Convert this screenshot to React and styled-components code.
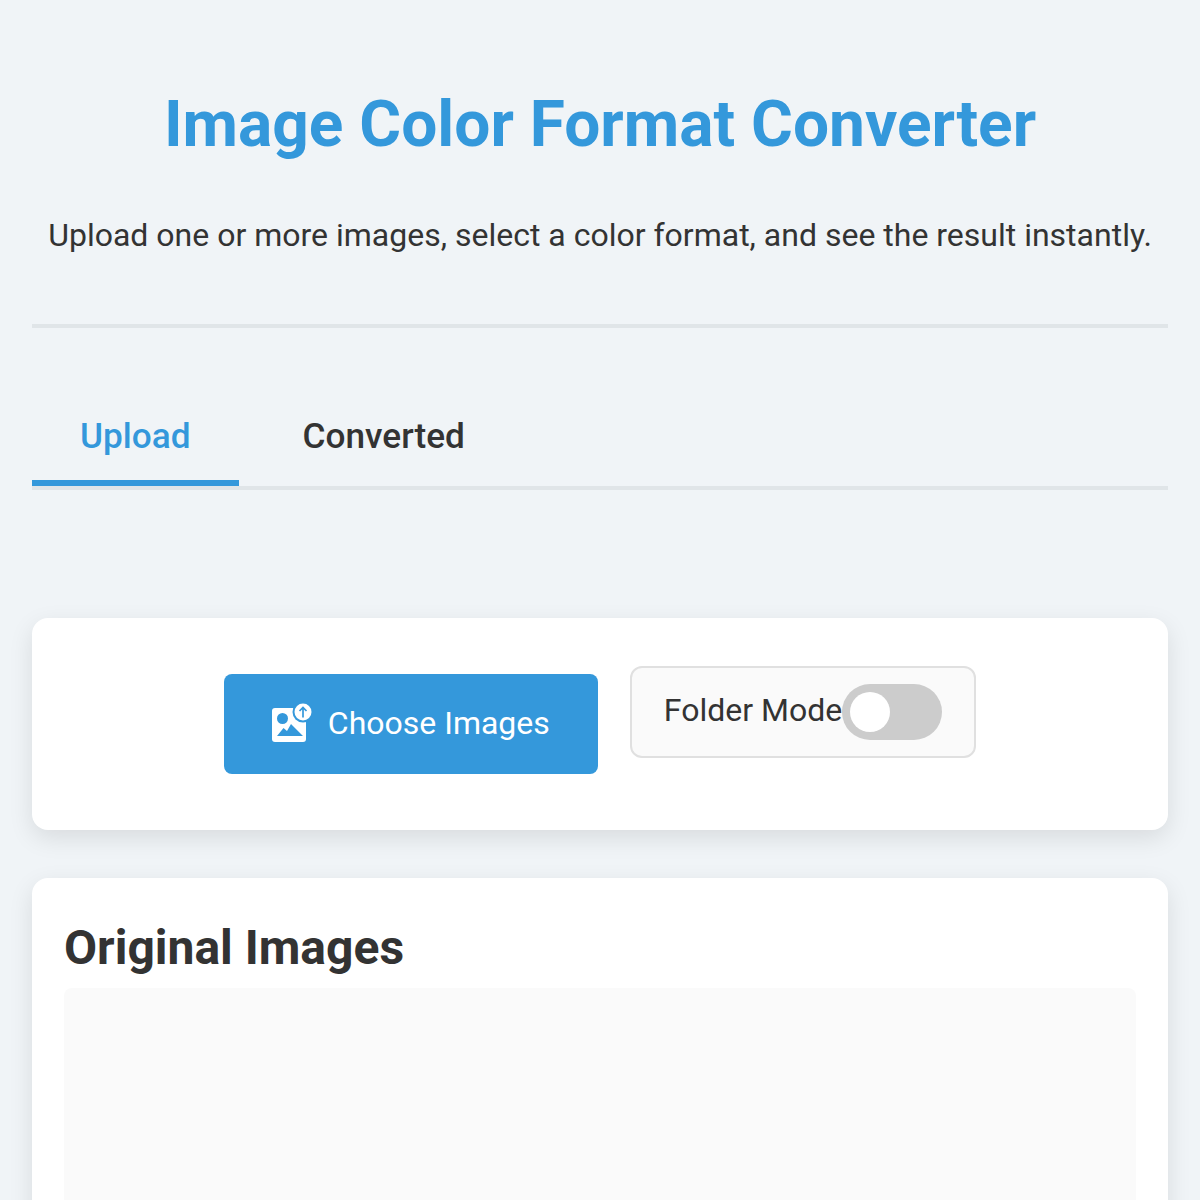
import React from "react";
import styled, { createGlobalStyle } from "styled-components";

const Global = createGlobalStyle`
  html, body { margin: 0; padding: 0; background: #f0f4f7; }
  body { font-family: Roboto, "Liberation Sans", sans-serif; color: #333; }
  * { box-sizing: border-box; }
`;

const Page = styled.div`
  height: 1200px;
  overflow: hidden;
  padding: 0 32px;
`;

const Header = styled.header`
  height: 328px;
  padding-top: 89px;
  border-bottom: 4px solid #e0e5e8;
  text-align: center;
`;

const Title = styled.h1`
  margin: 0;
  font-size: 64px;
  line-height: 72px;
  font-weight: 700;
  color: #3498db;
`;

const Subtitle = styled.p`
  margin: 50px -16px 0;
  font-size: 32px;
  line-height: 48px;
  color: #333;
  white-space: nowrap;
`;

const Tabs = styled.nav`
  display: flex;
  gap: 16px;
  height: 162px;
  align-items: flex-end;
  border-bottom: 4px solid #e0e5e8;
`;

const Tab = styled.button`
  border: 0;
  border-bottom: 6px solid ${(p) => (p.$active ? "#3498db" : "transparent")};
  background: none;
  padding: 0 48px 6px;
  height: 88px;
  font: 500 35.2px/40px Roboto, sans-serif;
  color: ${(p) => (p.$active ? "#3498db" : "#333")};
`;

const Card = styled.section`
  background: #fff;
  border-radius: 16px;
  box-shadow: 0 8px 24px rgba(0, 0, 0, 0.1);
`;

const UploadCard = styled(Card)`
  margin-top: 128px;
  padding: 48px;
  display: flex;
  justify-content: center;
  align-items: flex-start;
  gap: 32px;
`;

const ChooseButton = styled.button`
  display: flex;
  align-items: center;
  gap: 16px;
  height: 100px;
  margin: 8px 0;
  padding: 0 48px 2px;
  border: 0;
  border-radius: 8px;
  background: #3498db;
  color: #fff;
  font: 400 32px/40px Roboto, sans-serif;
`;

const ToggleBox = styled.div`
  display: flex;
  align-items: center;
  padding: 16px 32px;
  background: #fafafa;
  border: 2px solid #e0e0e0;
  border-radius: 12px;
  color: #333;
`;

const ToggleLabel = styled.span`
  font-size: 32px;
  line-height: 40px;
  margin-bottom: 4px;
`;

const Switch = styled.span`
  position: relative;
  display: block;
  width: 100px;
  height: 56px;
  border-radius: 28px;
  background: #ccc;
`;

const Knob = styled.span`
  position: absolute;
  left: 8px;
  top: 8px;
  width: 40px;
  height: 40px;
  border-radius: 50%;
  background: #fff;
`;

const ImagesCard = styled(Card)`
  margin-top: 48px;
  padding: 32px 32px 0;
  height: 600px;
`;

const Heading = styled.h2`
  margin: 0 0 2px;
  font-size: 48px;
  line-height: 76px;
  font-weight: 700;
  color: #333;
`;

const Gallery = styled.div`
  height: 400px;
  background: #fafafa;
  border-radius: 8px;
`;

const UploadIcon = () => (
  <svg width="40" height="40" viewBox="0 0 40 40" aria-hidden="true">
    <rect x="0" y="5" width="34" height="34" rx="3" fill="#fff" />
    <circle cx="10.5" cy="15.5" r="5.5" fill="#3498db" />
    <path d="M5 33 L11.5 25 L15 28 L19 21 L31 33 Z" fill="#3498db" />
    <circle cx="31" cy="9" r="10.5" fill="#3498db" />
    <circle cx="31" cy="9" r="8.5" fill="#fff" />
    <path d="M31 14.5 V4.5 M27.5 8 L31 4.5 L34.5 8" fill="none" stroke="#3498db" strokeWidth="1.7" />
  </svg>
);

export default function App() {
  return (
    <Page>
      <Global />
      <Header>
        <Title>Image Color Format Converter</Title>
        <Subtitle>Upload one or more images, select a color format, and see the result instantly.</Subtitle>
      </Header>
      <Tabs>
        <Tab $active>Upload</Tab>
        <Tab>Converted</Tab>
      </Tabs>
      <UploadCard>
        <ChooseButton>
          <UploadIcon />
          Choose Images
        </ChooseButton>
        <ToggleBox>
          <ToggleLabel>Folder Mode</ToggleLabel>
          <Switch>
            <Knob />
          </Switch>
        </ToggleBox>
      </UploadCard>
      <ImagesCard>
        <Heading>Original Images</Heading>
        <Gallery />
      </ImagesCard>
    </Page>
  );
}
